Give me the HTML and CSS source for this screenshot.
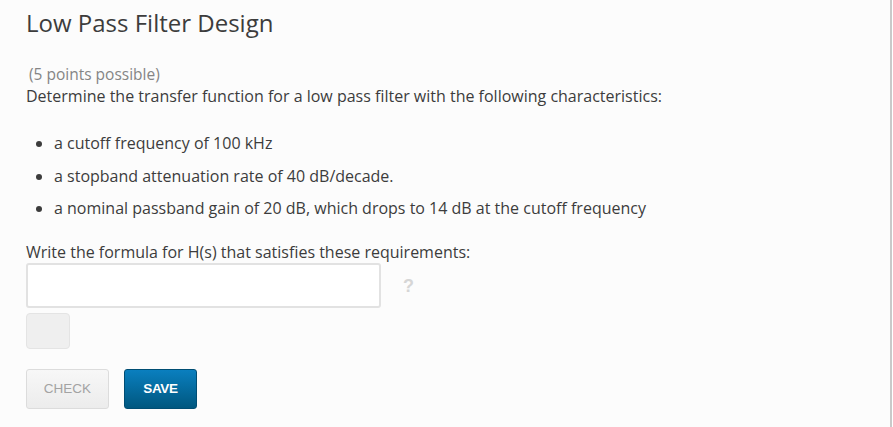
FILE: index.html
```html
<!DOCTYPE html>
<html>
<head>
<meta charset="utf-8">
<link rel="stylesheet" href="styles.css">
</head>
<body>
<div class="page">
  <section class="problem">
    <h2 class="title">Low Pass Filter Design</h2>
    <div class="points">(5 points possible)</div>
    <p class="intro">Determine the transfer function for a low pass filter with the following characteristics:</p>
    <ul class="specs">
      <li>a cutoff frequency of 100 kHz</li>
      <li>a stopband attenuation rate of 40 dB/decade.</li>
      <li>a nominal passband gain of 20 dB, which drops to 14 dB at the cutoff frequency</li>
    </ul>
    <p class="prompt">Write the formula for H(s) that satisfies these requirements:</p>
    <div class="answer-row">
      <input class="answer" type="text">
      <span class="status">?</span>
    </div>
    <div class="preview"></div>
    <div class="actions">
      <button class="btn check">CHECK</button>
      <button class="btn save">SAVE</button>
    </div>
  </section>
</div>
</body>
</html>
```
FILE: styles.css
```css
html, body {
  margin: 0;
  padding: 0;
  background: #fff;
}
body {
  font-family: "Open Sans", "DejaVu Sans", sans-serif;
  color: #3c3c3c;
}
.page {
  width: 892px;
  height: 427px;
  border-right: 2px solid #c9c9c9;
  background: #fcfcfc;
  box-sizing: border-box;
  padding: 0 0 0 26px;
}
.problem {
  display: flex;
  flex-direction: column;
  align-items: flex-start;
}
.title {
  margin: 0;
  padding-top: 8px;
  font-size: 24px;
  font-weight: 400;
  line-height: 30px;
  color: #3c3c3c;
}
.points {
  margin-top: 27px;
  padding-left: 3px;
  font-size: 15.5px;
  line-height: 18px;
  color: #858585;
}
.intro {
  margin: 2px 0 0;
  font-size: 16px;
  line-height: 22px;
}
.specs {
  margin: 25px 0 0;
  padding-left: 28px;
  font-size: 16px;
  line-height: 22px;
}
.specs li {
  margin-bottom: 10.5px;
}
.prompt {
  margin: 11px 0 0;
  font-size: 16px;
  line-height: 22px;
}
.answer-row {
  display: flex;
  align-items: center;
  margin-top: 0;
}
.answer {
  width: 355px;
  height: 45px;
  box-sizing: border-box;
  border: 2px solid #e2e2e2;
  border-radius: 3px;
  background: #fff;
  margin: 0;
  font-family: inherit;
}
.status {
  margin-left: 22px;
  margin-top: 2px;
  font-family: "Liberation Sans", Arial, sans-serif;
  font-weight: 700;
  font-size: 18px;
  color: #d6d6d6;
}
.preview {
  margin-top: 5px;
  width: 44px;
  height: 36px;
  box-sizing: border-box;
  background: #efefef;
  border: 1px solid #e4e4e4;
  border-radius: 4px;
}
.actions {
  display: flex;
  gap: 15px;
  margin-top: 20px;
}
.btn {
  height: 40px;
  box-sizing: border-box;
  border-radius: 3px;
  font-family: "Liberation Sans", Arial, sans-serif;
  font-size: 13.5px;
  padding: 0;
  margin: 0;
}
.check {
  width: 83px;
  color: #a3a3a3;
  background: linear-gradient(#f7f7f7, #ececec);
  border: 1px solid #dcdcdc;
}
.save {
  width: 73px;
  color: #fff;
  font-weight: 700;
  background: linear-gradient(#0a7fbf, #00577f);
  border: 1px solid #004d73;
  letter-spacing: -0.3px;
}
```
